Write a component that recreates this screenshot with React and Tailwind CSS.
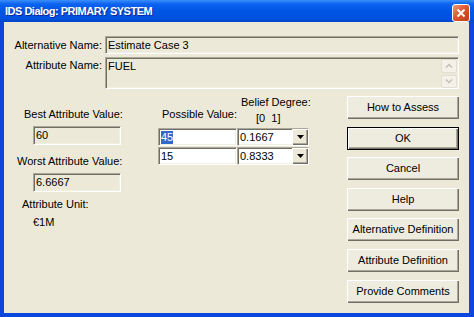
import React from 'react';

const sunken = 'border border-t-[#aca899] border-l-[#aca899] border-b-white border-r-white shadow-[inset_1px_1px_0_#716f64,inset_-1px_-1px_0_#f1efe2]';
const raised = 'shadow-[inset_1px_1px_0_#ffffff,inset_-1px_-1px_0_#716f64,inset_-2px_-2px_0_#aca899]';

const buttons = ['How to Assess', 'OK', 'Cancel', 'Help', 'Alternative Definition', 'Attribute Definition', 'Provide Comments'];

const DropArrow = () => (
    <div className={`w-[16px] h-full flex items-center justify-center bg-[#ece9d8] ${raised}`}>
        <svg width="7" height="4" viewBox="0 0 7 4">
            <path d="M0 0h7L3.5 4z" fill="#000" />
        </svg>
    </div>
);

const ScrollBtn = ({ up }) => (
    <div className="w-[16px] h-[14px] flex items-center justify-center bg-[#f3f1e8] border border-[#e2dfd2] rounded-[2px]">
        <svg width="8" height="5" viewBox="0 0 8 5">
            <path d={up ? 'M1 4.5L4 1.5L7 4.5' : 'M1 0.5L4 3.5L7 0.5'} stroke="#c4c1b3" strokeWidth="1.5" fill="none" />
        </svg>
    </div>
);

const App = () => {
    return (
        <div className="w-[474px] h-[317px] flex flex-col font-['Liberation_Sans',Arial,sans-serif] text-[11px] leading-[13px] text-black whitespace-nowrap overflow-hidden">
            {/* title bar */}
            <div className="h-[22px] shrink-0 flex items-center justify-between pl-[5px] pr-[4px] bg-[linear-gradient(to_bottom,#3b8ffc_0%,#0c63f0_18%,#0055e5_50%,#0051de_85%,#0044c6_100%)]">
                <span className="text-white font-bold text-[11px] tracking-[-0.5px] [text-shadow:1px_1px_0_#0b2a9a]">
                    IDS Dialog: PRIMARY SYSTEM
                </span>
                <div className="w-[18px] h-[18px] mt-[3px] rounded-[3px] border border-white flex items-center justify-center bg-[linear-gradient(135deg,#ee9a7c_0%,#e0582f_45%,#c23b18_100%)]">
                    <svg width="10" height="10" viewBox="0 0 10 10">
                        <path d="M1.5 1.5L8.5 8.5M8.5 1.5L1.5 8.5" stroke="#fff" strokeWidth="2" />
                    </svg>
                </div>
            </div>

            {/* window body */}
            <div className="flex-1 border-l-[4px] border-r-[5px] border-b-[4px] border-[#0b47dc] bg-[#ece9d8] flex flex-col">
                <div className="flex items-center mt-[14px]">
                    <div className="w-[98px] text-right">Alternative Name:</div>
                    <div className={`ml-[3px] w-[354px] h-[18px] flex items-center pl-[2px] ${sunken}`}>Estimate Case 3</div>
                </div>

                <div className="flex items-start mt-[3px]">
                    <div className="w-[98px] text-right pt-[2px]">Attribute Name:</div>
                    <div className={`ml-[3px] w-[354px] h-[32px] flex ${sunken}`}>
                        <div className="flex-1 pl-[2px] pt-[2px]">FUEL</div>
                        <div className="flex flex-col gap-[2px] pt-[1px] pr-[1px]">
                            <ScrollBtn up />
                            <ScrollBtn />
                        </div>
                    </div>
                </div>

                <div className="flex mt-[7px]">
                    {/* left column */}
                    <div className="w-[154px] flex flex-col items-start">
                        <div className="ml-[20px] mt-[12px]">Best Attribute Value:</div>
                        <div className={`ml-[29px] mt-[5px] w-[88px] h-[19px] flex items-center pl-[2px] ${sunken}`}>60</div>
                        <div className="ml-[13px] mt-[10px]">Worst Attribute Value:</div>
                        <div className={`ml-[29px] mt-[5px] w-[88px] h-[19px] flex items-center pl-[2px] ${sunken}`}>6.6667</div>
                        <div className="ml-[18px] mt-[6px]">Attribute Unit:</div>
                        <div className="ml-[29px] mt-[5px]">€1M</div>
                    </div>

                    {/* possible values */}
                    <div className="w-[151px] flex flex-col">
                        <div className="h-[32px] flex">
                            <div className="w-[79px] shrink-0 pl-[4px] pt-[12px]">Possible Value:</div>
                            <div className="flex flex-col pl-[4px]">
                                <div>Belief Degree:</div>
                                <div className="pl-[15px] mt-[3px] whitespace-pre">[0  1]</div>
                            </div>
                        </div>
                        <div className="flex flex-col gap-[1px]">
                            {[['45', '0.1667', true], ['15', '0.8333', false]].map(([v, d, sel]) => (
                                <div key={v} className="flex h-[18px]">
                                    <div className={`w-[79px] h-full flex items-center pl-[2px] bg-white ${sunken}`}>
                                        <span className={sel ? 'bg-[#316ac5] text-white' : ''}>{v}</span>
                                    </div>
                                    <div className={`w-[72px] h-full flex items-center bg-white ${sunken}`}>
                                        <div className="flex-1 pl-[2px]">{d}</div>
                                        <DropArrow />
                                    </div>
                                </div>
                            ))}
                        </div>
                    </div>

                    {/* buttons */}
                    <div className="ml-[38px] w-[112px] flex flex-col gap-[7.6px]">
                        {buttons.map((b) => (
                            <div
                                key={b}
                                className={`h-[23px] flex items-center justify-center bg-[#eeebdf] ${raised} ${b === 'OK' ? 'border border-black' : ''}`}
                            >
                                {b}
                            </div>
                        ))}
                    </div>
                </div>
            </div>
        </div>
    );
};

export default App;
